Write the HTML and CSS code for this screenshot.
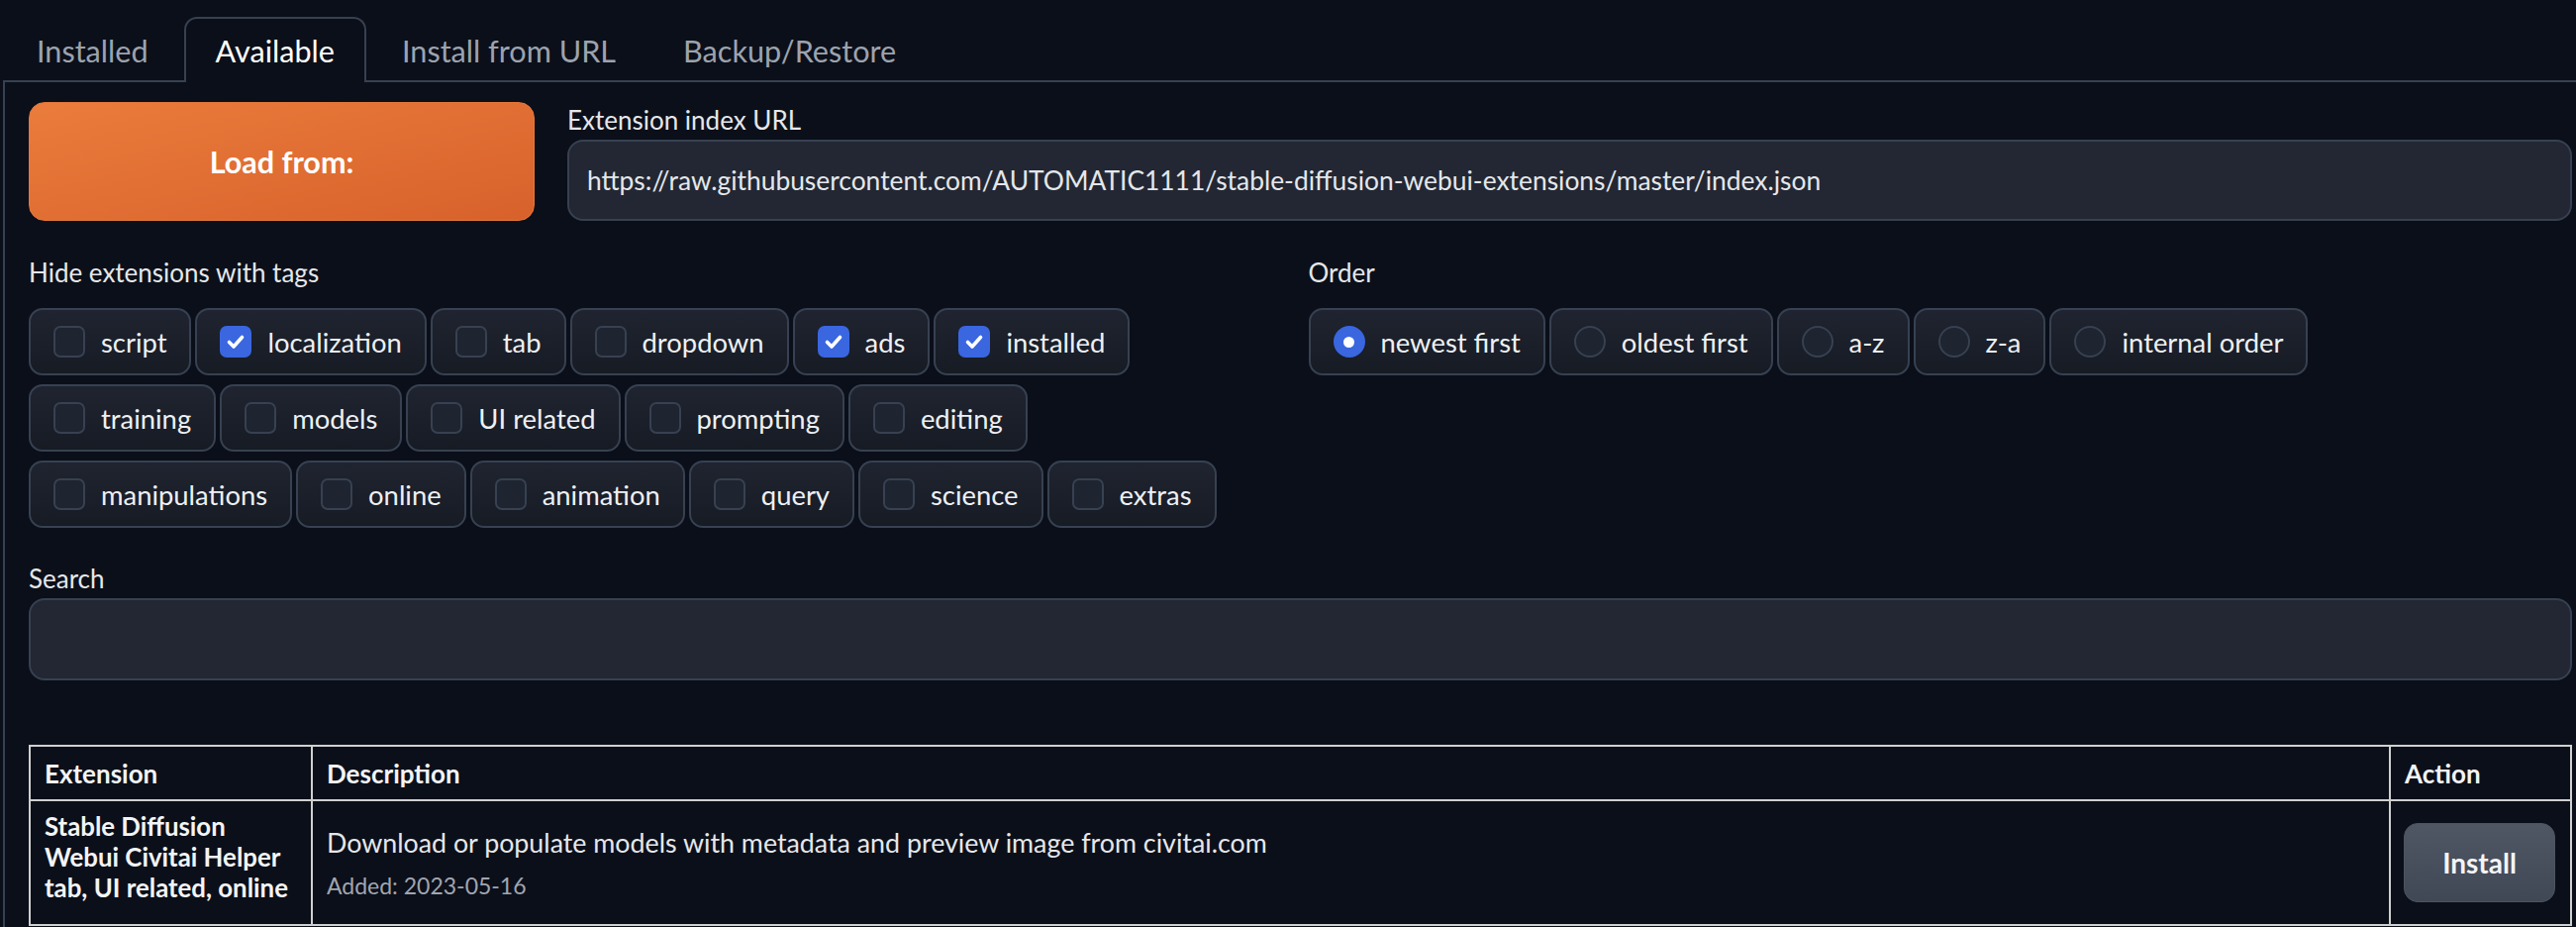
FILE: index.html
```html
<!DOCTYPE html>
<html lang="en">
<head>
<meta charset="utf-8">
<title>Extensions</title>
<link rel="stylesheet" href="styles.css">
</head>
<body>
<div class="tab-nav">
  <div class="tab">Installed</div>
  <div class="tab selected">Available</div>
  <div class="tab">Install from URL</div>
  <div class="tab">Backup/Restore</div>
</div>
<div class="panel">
  <div class="load-row">
    <div class="btn-primary">Load from:</div>
    <div class="url-field">
      <div class="label">Extension index URL</div>
      <div class="input">https://raw.githubusercontent.com/AUTOMATIC1111/stable-diffusion-webui-extensions/master/index.json</div>
    </div>
  </div>

  <div class="filters">
    <div class="filter-col">
      <div class="label spaced">Hide extensions with tags</div>
      <div class="pills">
        <div class="pill-row">
          <div class="pill"><span class="box"></span><span>script</span></div>
          <div class="pill"><span class="box checked"><svg viewBox="0 0 32 32" width="32" height="32"><path d="M9.5 16.5l4.5 4.5 8.5-9.5" fill="none" stroke="#fff" stroke-width="3.6" stroke-linecap="round" stroke-linejoin="round"/></svg></span><span>localization</span></div>
          <div class="pill"><span class="box"></span><span>tab</span></div>
          <div class="pill"><span class="box"></span><span>dropdown</span></div>
          <div class="pill"><span class="box checked"><svg viewBox="0 0 32 32" width="32" height="32"><path d="M9.5 16.5l4.5 4.5 8.5-9.5" fill="none" stroke="#fff" stroke-width="3.6" stroke-linecap="round" stroke-linejoin="round"/></svg></span><span>ads</span></div>
          <div class="pill"><span class="box checked"><svg viewBox="0 0 32 32" width="32" height="32"><path d="M9.5 16.5l4.5 4.5 8.5-9.5" fill="none" stroke="#fff" stroke-width="3.6" stroke-linecap="round" stroke-linejoin="round"/></svg></span><span>installed</span></div>
        </div>
        <div class="pill-row">
          <div class="pill"><span class="box"></span><span>training</span></div>
          <div class="pill"><span class="box"></span><span>models</span></div>
          <div class="pill"><span class="box"></span><span>UI related</span></div>
          <div class="pill"><span class="box"></span><span>prompting</span></div>
          <div class="pill"><span class="box"></span><span>editing</span></div>
        </div>
        <div class="pill-row">
          <div class="pill"><span class="box"></span><span>manipulations</span></div>
          <div class="pill"><span class="box"></span><span>online</span></div>
          <div class="pill"><span class="box"></span><span>animation</span></div>
          <div class="pill"><span class="box"></span><span>query</span></div>
          <div class="pill"><span class="box"></span><span>science</span></div>
          <div class="pill"><span class="box"></span><span>extras</span></div>
        </div>
      </div>
    </div>
    <div class="filter-col">
      <div class="label spaced">Order</div>
      <div class="pills">
        <div class="pill-row">
          <div class="pill"><span class="radio checked"></span><span>newest first</span></div>
          <div class="pill"><span class="radio"></span><span>oldest first</span></div>
          <div class="pill"><span class="radio"></span><span>a-z</span></div>
          <div class="pill"><span class="radio"></span><span>z-a</span></div>
          <div class="pill"><span class="radio"></span><span>internal order</span></div>
        </div>
      </div>
    </div>
  </div>

  <div class="search-field">
    <div class="label">Search</div>
    <div class="input search"></div>
  </div>

  <table class="ext-table">
    <colgroup>
      <col class="col-ext">
      <col class="col-desc">
      <col class="col-action">
    </colgroup>
    <thead>
      <tr><th>Extension</th><th>Description</th><th>Action</th></tr>
    </thead>
    <tbody>
      <tr>
        <td class="ext-name">Stable Diffusion Webui Civitai Helper<br><span class="ext-tags">tab, UI related, online</span></td>
        <td class="ext-desc">
          <div class="desc-text">Download or populate models with metadata and preview image from civitai.com</div>
          <div class="date-added">Added: 2023-05-16</div>
        </td>
        <td class="ext-action"><div class="btn-secondary">Install</div></td>
      </tr>
    </tbody>
  </table>
</div>
</body>
</html>
```

FILE: styles.css
```css
* { box-sizing: border-box; }

html, body {
  margin: 0;
  padding: 0;
}

body {
  width: 2602px;
  height: 936px;
  overflow: hidden;
  background: #0b0f19;
  color: #e5e7eb;
  font-family: Lato, "Liberation Sans", sans-serif;
}

/* ---------- tabs ---------- */
.tab-nav {
  display: flex;
  margin-left: 3px;
  padding: 17px 0 0 2px;
  border-bottom: 2px solid #374151;
}

.tab {
  height: 66px;
  margin-bottom: -2px;
  margin-right: 4px;
  padding: 0 30px;
  display: flex;
  align-items: center;
  border: 2px solid transparent;
  border-bottom: none;
  border-radius: 13px 13px 0 0;
  color: #9ca3af;
  font-size: 30.6px;
}

.tab.selected {
  border-color: #374151;
  background: #0b0f19;
  color: #ffffff;
}

/* ---------- panel ---------- */
.panel {
  margin-left: 3px;
  border-left: 2px solid #374151;
  padding: 20px 4px 40px 24px;
}

.load-row {
  display: flex;
  align-items: flex-end;
}

.btn-primary {
  flex: none;
  width: 511px;
  height: 120px;
  display: flex;
  align-items: center;
  justify-content: center;
  border-radius: 16px;
  border: 1px solid #e5783a;
  background: linear-gradient(to bottom right, #ea7c3c, #d8612b);
  color: #ffffff;
  font-size: 30.5px;
  font-weight: 700;
}

.url-field {
  flex: 1;
  margin-left: 33px;
}

.label {
  font-size: 26px;
  line-height: 36px;
  margin-bottom: 2px;
  color: #e5e7eb;
}

.label.spaced {
  margin-bottom: 18px;
}

.input {
  height: 82px;
  display: flex;
  align-items: center;
  padding: 0 18px;
  border: 2px solid #374151;
  border-radius: 16px;
  background: #222733;
  color: #e5e7eb;
  font-size: 26.4px;
  white-space: nowrap;
}

.input.search {
  height: 83px;
}

/* ---------- filters ---------- */
.filters {
  display: grid;
  grid-template-columns: 1fr 1fr;
  column-gap: 16px;
  margin-top: 34px;
}

.pills {
  display: flex;
  flex-direction: column;
  gap: 9px;
}

.pill-row {
  display: flex;
  gap: 4px;
}

.pill {
  height: 68px;
  display: flex;
  align-items: center;
  padding: 0 23px;
  border: 2px solid #374151;
  border-radius: 14px;
  background: linear-gradient(to bottom, #1f2430, #161b24);
  color: #eef0f3;
  font-size: 27.4px;
  white-space: nowrap;
}

.box,
.radio {
  flex: none;
  width: 32px;
  height: 32px;
  margin-right: 16px;
  display: flex;
  align-items: center;
  justify-content: center;
  border: 2px solid #374151;
  background: #1e2430;
}

.box {
  border-radius: 7px;
}

.box svg {
  display: block;
  flex: none;
  margin: -2px;
}

.box.checked {
  background: #3a66e0;
  border-color: #3a66e0;
}

.radio {
  border-radius: 50%;
}

.radio.checked {
  background: #3a66e0;
  border-color: #3a66e0;
}

.radio.checked::after {
  content: "";
  width: 11px;
  height: 11px;
  border-radius: 50%;
  background: #ffffff;
}

/* ---------- search ---------- */
.search-field {
  margin-top: 33px;
}

/* ---------- table ---------- */
.ext-table {
  width: 100%;
  margin-top: 65px;
  border-collapse: collapse;
  table-layout: fixed;
}

.col-ext { width: 285px; }
.col-action { width: 183px; }

.ext-table th,
.ext-table td {
  border: 2px solid #d0d0d0;
}

.ext-table th {
  height: 55px;
  padding: 0 14px;
  text-align: left;
  vertical-align: middle;
  font-size: 26px;
  font-weight: 700;
  color: #f3f4f6;
}

.ext-name {
  vertical-align: top;
  padding: 10px 14px;
  font-size: 25.8px;
  font-weight: 700;
  line-height: 31px;
  color: #f3f4f6;
}

.ext-desc {
  vertical-align: middle;
  padding: 0 14px;
}

.desc-text {
  font-size: 26.8px;
  line-height: 36px;
  color: #e5e7eb;
}

.date-added {
  margin-top: 10px;
  font-size: 23px;
  line-height: 30px;
  color: #a0a6b1;
}

.ext-action {
  vertical-align: middle;
  padding: 22px 13px;
}

.btn-secondary {
  width: 153px;
  height: 80px;
  display: flex;
  align-items: center;
  justify-content: center;
  border-radius: 14px;
  border: 1px solid #4b5563;
  background: linear-gradient(to bottom, #4f5664, #404755);
  color: #f3f4f6;
  font-size: 28px;
  font-weight: 700;
}
```
